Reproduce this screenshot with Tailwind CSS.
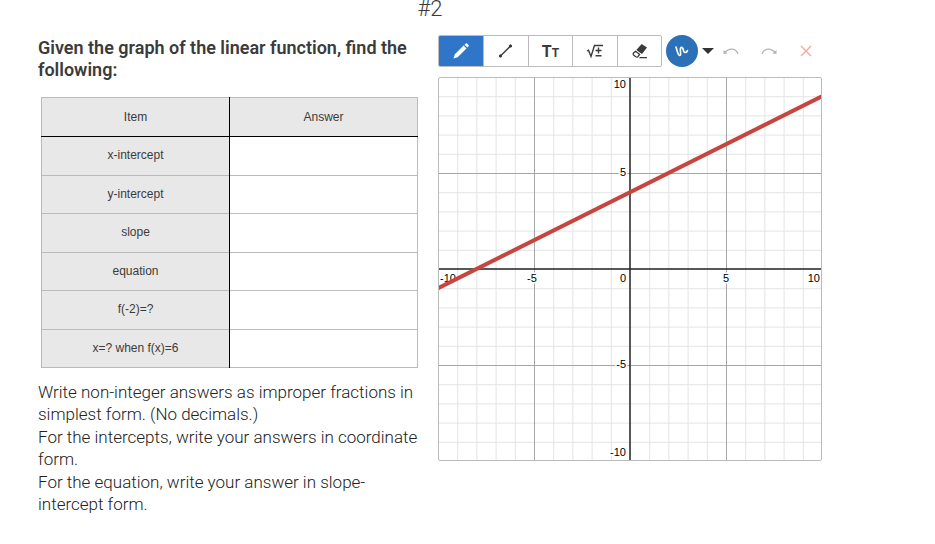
<!DOCTYPE html>
<html lang="en">
<head>
    <meta charset="UTF-8">
    <meta name="viewport" content="width=device-width, initial-scale=1.0">
    <title>Linear Functions #2</title>
    <script src="https://cdn.jsdelivr.net/npm/@tailwindcss/browser@4"></script>
</head>
<body class="bg-white min-h-screen pl-[38px] pr-[113px] font-['Roboto',sans-serif] text-[#3b3b3b]">
    <h1 class="h-[35px] text-center text-[22px] leading-[18px] font-light">#2</h1>

    <main class="grid grid-cols-2 gap-4">
        <section>
            <h2 class="pt-0.5 text-[18px] leading-[22px] font-semibold">Given the graph of the linear function, find the following:</h2>

            <div class="mt-4 pr-1 pl-[3px]">
                <table class="w-full table-fixed border-collapse border border-[#bbb] text-center text-xs font-['Liberation_Sans',sans-serif]">
                    <thead>
                        <tr class="h-[39px] bg-[#e8e8e8]">
                            <th scope="col" class="border-b border-r border-black font-normal">Item</th>
                            <th scope="col" class="border-b border-black font-normal">Answer</th>
                        </tr>
                    </thead>
                    <tbody id="rows"></tbody>
                </table>
            </div>

            <div class="mt-[13px] grid gap-px text-[17px] leading-[22px] font-light text-[#222]">
                <p>Write non-integer answers as improper fractions in simplest form. (No decimals.)</p>
                <p>For the intercepts, write your answers in coordinate form.</p>
                <p>For the equation, write your answer in slope-intercept form.</p>
            </div>
        </section>

        <section>
            <div class="flex h-8 items-center">
                <div class="flex h-8 divide-x divide-[#bbb] overflow-hidden rounded-xs border border-[#bbb]">
                    <button aria-label="Pencil" class="flex w-[45px] items-center justify-center bg-[#2f76c8] text-white">
                        <svg width="20" height="20" viewBox="0 0 20 20" fill="currentColor"><path d="M2.500 17.500l1.300-4.200L12.600 4.600l2.900 2.900L6.600 16.200zM13.500 3.700l1.300-1.200q.7-.5 1.300 0l1.500 1.500q.5.600 0 1.300L16.400 6.600z"/></svg>
                    </button>
                    <button aria-label="Line" class="flex w-[45px] items-center justify-center">
                        <svg width="16" height="16" viewBox="0 0 16 16" fill="currentColor" stroke="currentColor"><path d="M2.500 13L12.500 3" stroke-width="1.300"/><circle cx="2.500" cy="13" r="1.200"/><circle cx="12.500" cy="3" r="1.200"/></svg>
                    </button>
                    <button aria-label="Text" class="flex w-11 items-baseline justify-center pt-1 leading-5 font-bold">
                        <span class="text-base">T</span><span class="text-xs">T</span>
                    </button>
                    <button aria-label="Math" class="flex w-[45px] items-center justify-center">
                        <svg width="18" height="16" viewBox="0 0 18 16" fill="none" stroke="currentColor"><path d="M1 8l1.500-.8L5 13.500 8.500 2.500H17" stroke-width="1.400"/><path d="M9.500 7.500h6M12.500 4.500v6M9.500 12.700h6" stroke-width="1.400"/></svg>
                    </button>
                    <button aria-label="Eraser" class="flex w-[43px] items-center justify-center">
                        <svg width="18" height="18" viewBox="0 0 18 18" fill="currentColor"><path d="M10.700 2L16 5.500 11 12 5.300 8z"/><path d="M4.500 9.300L8.600 12.300 6.900 14.700q-1 .8-2.100.1L2.500 13q-.8-.9 0-2z" fill="none" stroke="currentColor" stroke-width="1.300"/><path d="M9 15h7v1.300H8z"/></svg>
                    </button>
                </div>
                <button aria-label="Stroke style" class="ml-1 flex size-8 items-center justify-center rounded-full bg-[#2c70b7] text-white">
                    <svg width="16" height="16" viewBox="0 0 16 16" fill="none" stroke="currentColor" stroke-width="1.600" stroke-linecap="round"><path d="M2 4C3 7 3.800 12.500 5.800 12.500 8 12.500 5 6 7 4.500 9.800 3.500 8.800 9.500 11 9.500 12.500 9.500 13.200 8.800 13.500 7.500"/></svg>
                </button>
                <button aria-label="More styles" class="ml-1 text-[#333]">
                    <svg width="12" height="6" viewBox="0 0 12 6" fill="currentColor"><path d="M0 0h12L6 6z"/></svg>
                </button>
                <div class="flex grow items-center justify-between pr-2 pl-2">
                    <button aria-label="Undo" class="text-[#b5b5b5]">
                        <svg width="18" height="12" viewBox="0 0 18 12" fill="none" stroke="currentColor" stroke-width="1.300"><path d="M16 9C14 3 7 2.500 3 7.500"/><path d="M1.500 5v4l4-.5z" fill="currentColor" stroke="none"/></svg>
                    </button>
                    <button aria-label="Redo" class="text-[#b5b5b5]">
                        <svg width="18" height="12" viewBox="0 0 18 12" fill="none" stroke="currentColor" stroke-width="1.300"><path d="M2 9C4 3 11 2.500 15 7.500"/><path d="M16.500 5v4l-4-.5z" fill="currentColor" stroke="none"/></svg>
                    </button>
                    <button aria-label="Clear" class="text-[#f0a89c]">
                        <svg width="16" height="16" viewBox="0 0 16 16" fill="none" stroke="currentColor" stroke-width="1.300"><path d="M3 3l10 10M13 3L3 13"/></svg>
                    </button>
                </div>
            </div>

            <div class="mt-[10px] overflow-hidden rounded-xs border border-[#bbb]">
                <svg id="graph" viewBox="1 1 382 382" class="block w-full" role="img" aria-label="Graph of a linear function">
                    <g id="grid" fill="none"></g>
                    <g id="labels" class="font-['Liberation_Sans',sans-serif] text-[11px]" fill="#000" stroke="#fff" stroke-width="3" paint-order="stroke"></g>
                    <line id="line" stroke="#c74440" stroke-width="4"/>
                </svg>
            </div>
        </section>
    </main>

    <script>
        const items = ['x-intercept', 'y-intercept', 'slope', 'equation', 'f(-2)=?', 'x=? when f(x)=6'];
        document.getElementById('rows').innerHTML = items.map((item, i) => `
            <tr class="${i % 2 ? 'h-[38px]' : 'h-[39px]'} border-b border-[#bbb]">
                <th scope="row" class="border-r border-r-black bg-[#e8e8e8] p-0 pb-0.5 font-normal"><label for="answer${i}">${item}</label></th>
                <td class="p-0"><input id="answer${i}" type="text" class="block h-8 w-full px-2 text-center outline-none"></td>
            </tr>`).join('');

        // graph runs from -10 to 10 on both axes
        const unit = 19.2;
        const px = x => 192 + x * unit;
        const py = y => 192 - y * unit;

        // grid lines sit on the middle of a pixel, the axes cover two
        const gridLine = (n, color) => `
            <path d="M${px(n) + 0.5} 0V384M0 ${py(n) + 0.5}H384" stroke="${color}"/>`;
        let grid = '';
        for (let n = -9; n <= 9; n++) {
            if (n % 5) grid += gridLine(n, '#e4e4e4');
        }
        grid += gridLine(-5, '#a6a6a6') + gridLine(5, '#a6a6a6');
        grid += '<path d="M192 0V384M0 192H384" stroke="#222" stroke-width="1.5"/>';
        document.getElementById('grid').innerHTML = grid;

        const labels = [
            [2, 205, '-10', 'start'], [94, 205, '-5', 'middle'], [188, 205, '0', 'end'],
            [288, 205, '5', 'middle'], [382, 205, '10', 'end'],
            [188, 11, '10', 'end'], [188, 99, '5', 'end'], [188, 291, '-5', 'end'], [188, 379, '-10', 'end']
        ];
        document.getElementById('labels').innerHTML = labels.map(([x, y, text, anchor]) =>
            `<text x="${x}" y="${y}" text-anchor="${anchor}">${text}</text>`).join('');

        // y = x/2 + 4
        const line = document.getElementById('line');
        line.setAttribute('x1', px(-11));
        line.setAttribute('y1', py(-1.5));
        line.setAttribute('x2', px(11));
        line.setAttribute('y2', py(9.5));
    </script>
</body>
</html>
